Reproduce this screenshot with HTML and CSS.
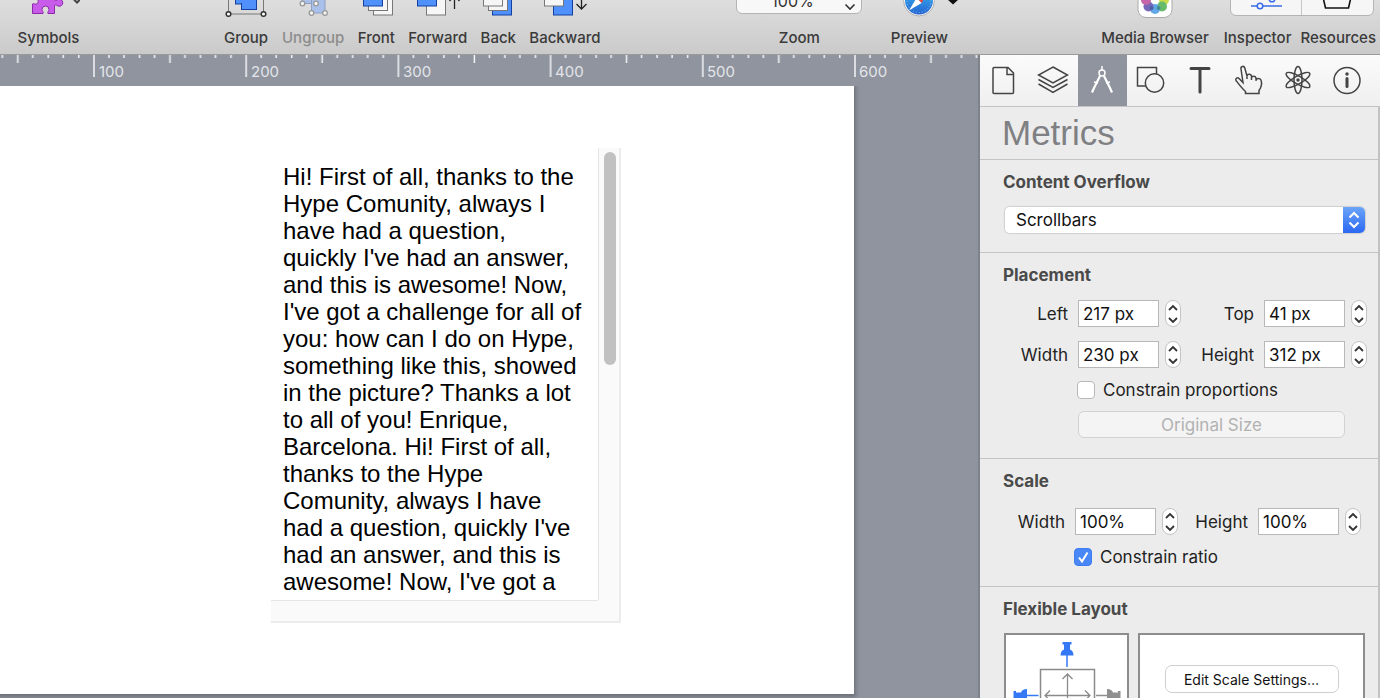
FILE: index.html
```html
<!DOCTYPE html>
<html lang="en">
<head>
<meta charset="utf-8">
<title>Metrics Inspector</title>
<link rel="stylesheet" href="styles.css">
</head>
<body>
<div class="app">
  <header class="toolbar">
    <button class="tool" type="button">
      <svg width="63" height="32" viewBox="0 0 63 32" fill="none">
        <path d="M15.500 3.500H23a4 4 0 1 1 7 0h7.500V12c1.500 1 2 0 3.500-.5a3.500 3.500 0 1 1 0 6.500c-1.500-.5-2-1.500-3.500-.5V25.500h-6.500c-1-1.500 1-2 1-4a3.500 3.500 0 0 0-7 0c0 2 2 2.500 1 4H15.500V16c1.500-1 2.500.5 4 0a3 3 0 0 0 0-5.500c-1.500-.5-2.500 1-4 0z" fill="#c95bea" stroke="#8a2aa8"/>
        <path d="M56 10.500l4 4 4-4" stroke="#444" stroke-width="2"/>
      </svg>
      <span>Symbols</span>
    </button>
    <i class="space space-a"></i>
    <div class="tool-set">
      <button class="tool" type="button">
        <svg width="46" height="32" viewBox="0 0 46 32" fill="none">
          <rect x="5.500" y="1.500" width="35" height="24.500" stroke="#777"/>
          <g fill="#4f90fb" stroke="#1540a0"><rect x="12.500" y="4.500" width="15" height="11.500"/><rect x="18.500" y="9.500" width="15" height="12"/><path d="M13 5h14v10H13z" stroke="none"/></g>
          <g fill="#fff" stroke="#333" stroke-width="1.500"><circle cx="5.500" cy="26" r="2.300"/><circle cx="40.500" cy="26" r="2.300"/></g>
        </svg>
        <span>Group</span>
      </button>
      <button class="tool" type="button" disabled>
        <svg width="46" height="32" viewBox="0 0 46 32">
          <g fill="#a9c1ea" stroke="#8d9fc2"><rect x="12" y="3.500" width="14" height="12"/><rect x="21.500" y="11" width="13.500" height="14"/></g>
          <g fill="#f4f4f4" stroke="#999" stroke-width="1.300"><circle cx="12.500" cy="15.500" r="2.300"/><circle cx="26" cy="15.500" r="2.300"/><circle cx="21.500" cy="25" r="2.300"/><circle cx="35" cy="25" r="2.300"/></g>
        </svg>
        <span>Ungroup</span>
      </button>
      <button class="tool" type="button">
        <svg width="38" height="32" viewBox="1 0 38 32">
          <g fill="#f6f6f6" stroke="#777"><rect x="17.500" y="9.500" width="19" height="17.500"/><rect x="12.500" y="5.500" width="19" height="17"/></g>
          <rect x="7.500" y="1.500" width="19" height="16.500" fill="#4f90fb" stroke="#1540a0"/>
        </svg>
        <span>Front</span>
      </button>
      <button class="tool" type="button">
        <svg width="50" height="32" viewBox="0 0 50 32">
          <rect x="13.500" y="9.500" width="19" height="17.500" fill="#f6f6f6" stroke="#777"/>
          <rect x="4.500" y="1.500" width="19" height="16.500" fill="#4f90fb" stroke="#1540a0"/>
          <path d="M41.500 21V8M36.500 13l5-5 5 5" fill="none" stroke="#222" stroke-width="1.300"/>
        </svg>
        <span>Forward</span>
      </button>
      <button class="tool" type="button">
        <svg width="36" height="32" viewBox="2 0 36 32">
          <rect x="14.500" y="9.500" width="19" height="17.500" fill="#4f90fb" stroke="#1540a0"/>
          <g fill="#f6f6f6" stroke="#777"><rect x="10.500" y="5.500" width="19" height="17"/><rect x="5.500" y="1.500" width="19" height="16.500"/></g>
        </svg>
        <span>Back</span>
      </button>
      <button class="tool" type="button">
        <svg width="50" height="32" viewBox="0 0 50 32">
          <rect x="13.500" y="9.500" width="19" height="17.500" fill="#4f90fb" stroke="#1540a0"/>
          <rect x="4.500" y="1.500" width="19" height="16.500" fill="#f6f6f6" stroke="#777"/>
          <path d="M41.500 6v15M36.500 16l5 5 5-5" fill="none" stroke="#222" stroke-width="1.300"/>
        </svg>
        <span>Backward</span>
      </button>
    </div>
    <i class="space space-b"></i>
    <div class="tool">
      <select class="zoom" id="zoom"><option>100%</option></select>
      <label for="zoom">Zoom</label>
    </div>
    <button class="tool preview" type="button">
      <svg width="84" height="32" viewBox="0 0 84 32">
        <defs><linearGradient id="sea" x1="0" y1="0" x2="0" y2="1"><stop offset="0" stop-color="#39c0f5"/><stop offset="1" stop-color="#2563d0"/></linearGradient></defs>
        <circle cx="42" cy="12.500" r="15.500" fill="#f4f4f4" stroke="#b0b0b0"/>
        <circle cx="42" cy="12.500" r="14" fill="url(#sea)"/>
        <circle cx="42" cy="12.500" r="12" fill="none" stroke="#8cc4fa" stroke-dasharray="1 2"/>
        <path d="M52 2.500L44.500 15 39.500 10z" fill="#f04438"/><path d="M32 22.500L44.500 15 39.500 10z" fill="#fff"/>
        <path d="M70 11h12l-6 5.500z" fill="#111"/>
      </svg>
      <span>Preview</span>
    </button>
    <i class="space space-c"></i>
    <button class="tool" type="button">
      <svg width="38" height="32" viewBox="0 0 38 32">
        <rect x="2" y="-5" width="34" height="34.500" rx="8" fill="#fff" stroke="#aaa"/>
        <g opacity=".9">
          <circle cx="19" cy="3" r="5" fill="#f59a2c"/><circle cx="26" cy="5.500" r="5" fill="#f0cf3a"/><circle cx="28" cy="12" r="5" fill="#c4d936"/><circle cx="26" cy="18.500" r="5" fill="#57b45b"/><circle cx="19" cy="21" r="5" fill="#4f9fe6"/><circle cx="12.500" cy="18.500" r="5" fill="#6a58b5"/><circle cx="10" cy="12" r="5" fill="#c0559f"/><circle cx="12.500" cy="5.500" r="5" fill="#ee6a50"/>
          <circle cx="15.500" cy="20" r="2" fill="#3a4f9c"/><circle cx="22.500" cy="20" r="2" fill="#2f7f86"/>
        </g>
        <circle cx="19" cy="12" r="2" fill="#fff"/>
      </svg>
      <span>Media Browser</span>
    </button>
    <div class="pair">
      <div class="segments">
        <button type="button" aria-labelledby="t-inspector">
          <svg width="40" height="28" viewBox="0 0 40 28" fill="#f6f6f6" stroke="#3a6be8" stroke-width="1.500"><path d="M5 7h31M5 14h31M5 21h31"/><circle cx="14" cy="7" r="2.800"/><circle cx="26" cy="14" r="2.800"/><circle cx="14" cy="21" r="2.800"/></svg>
        </button>
        <button type="button" aria-labelledby="t-resources">
          <svg width="40" height="28" viewBox="0 0 40 28" fill="none" stroke="#111" stroke-width="1.600"><path d="M4 6h32M5.500 10l3 13h23l3-13z"/></svg>
        </button>
      </div>
      <div class="pair-labels"><span id="t-inspector">Inspector</span><span id="t-resources">Resources</span></div>
    </div>
  </header>

  <div class="work">
    <main class="canvas">
      <div class="ruler">
        <svg class="ticks" width="100%" height="22">
          <defs>
            <pattern id="tick" x="93" y="0" width="152.200" height="22" patternUnits="userSpaceOnUse">
              <path d="M1 0v22" stroke="#f4f5f7" stroke-width="1.500"/>
              <path d="M16 0v3M31 0v3M46.500 0v3M61.500 0v3M92 0v3M107.500 0v3M122.500 0v3M138 0v3M77 0v8" stroke="#f4f5f7" stroke-width="1.500"/>
            </pattern>
          </defs>
          <rect width="100%" height="22" fill="url(#tick)"/>
        </svg>
        <div class="marks"><span>100</span><span>200</span><span>300</span><span>400</span><span>500</span><span>600</span></div>
      </div>
      <section class="page">
        <div class="scroll-frame">
          <p class="story">Hi! First of all, thanks to the Hype Comunity, always I have had a question, quickly I've had an answer, and this is awesome! Now, I've got a challenge for all of you: how can I do on Hype, something like this, showed in the picture? Thanks a lot to all of you! Enrique, Barcelona. Hi! First of all, thanks to the Hype Comunity, always I have had a question, quickly I've had an answer, and this is awesome! Now, I've got a</p>
          <div class="track"><div class="thumb"></div></div>
          <div class="track-bottom"></div>
        </div>
      </section>
    </main>

    <aside class="inspector">
      <nav class="tabs">
        <button type="button" aria-label="Document"><svg width="32" height="32" viewBox="0 0 32 32"><path d="M6 3.500h14l5.500 5.500v19.500a1 1 0 0 1-1 1H6a1 1 0 0 1-1-1v-24a1 1 0 0 1 1-1zM19 4v6.500h6.500"/></svg></button>
        <button type="button" aria-label="Scene"><svg width="32" height="32" viewBox="0 0 32 32"><path d="M16 3l14.500 8L16 19 1.500 11zM1.500 15.500l14.500 8 14.500-8M1.500 20l14.500 8.500L30.500 20"/></svg></button>
        <button class="active" type="button" aria-label="Metrics"><svg width="32" height="32" viewBox="0 0 32 32"><circle cx="16" cy="9" r="3"/><path d="M16 2v4"/><path d="M14 12L8 24l-2 4.500M18 12l6 12 2 4.500" stroke-width="2.200"/><path d="M8 18l4 1M24 18l-4 1"/></svg></button>
        <button type="button" aria-label="Element"><svg width="32" height="32" viewBox="0 0 32 32"><path d="M10.500 22H2.500V3.500h19v6.500"/><circle cx="19.500" cy="19" r="9.200"/></svg></button>
        <button type="button" aria-label="Typography"><svg width="32" height="32" viewBox="0 0 32 32"><path d="M7 4.500h18M16 4.500V28" stroke-width="3" stroke-linecap="round"/></svg></button>
        <button type="button" aria-label="Actions"><svg width="32" height="32" viewBox="0 0 32 32"><path d="M12.500 29.500v-2C8.500 24 6 20.500 3 16.500c-1-2 1.500-3.500 3-2l4 4L8 5c-.5-3 3-3.500 3.800-1L14 12c0-2.500 4-2.500 4.500 0v2c0-2.500 4-2.500 4.500 0v2c.5-2 4-2 5 0 1 3 .5 7-2 10.500v3zM14 11v4M18.500 13v3M23 15v2"/></svg></button>
        <button type="button" aria-label="Physics"><svg width="32" height="32" viewBox="0 0 32 32"><ellipse cx="16" cy="16" rx="4" ry="13.500"/><ellipse cx="16" cy="16" rx="4" ry="13.500" transform="rotate(60 16 16)"/><ellipse cx="16" cy="16" rx="4" ry="13.500" transform="rotate(120 16 16)"/><circle cx="16" cy="16" r="1" fill="#444"/></svg></button>
        <button type="button" aria-label="Identity"><svg width="32" height="32" viewBox="0 0 32 32"><circle cx="16" cy="16.500" r="13"/><path d="M16 14.500v8" stroke-width="3" stroke-linecap="round"/><circle cx="16" cy="10" r="1" fill="#444"/></svg></button>
      </nav>

      <div class="panel">
        <h1>Metrics</h1>

        <section class="group overflow">
          <h2><label for="overflow">Content Overflow</label></h2>
          <div class="popup">
            <select id="overflow"><option>Scrollbars</option></select>
            <svg class="popup-cap" width="22" height="26" viewBox="0 0 22 26"><path d="M6.500 10.500L11 6l4.500 4.500M6.500 15.500L11 20l4.500-4.500"/></svg>
          </div>
        </section>

        <section class="group placement">
          <h2>Placement</h2>
          <div class="fields">
            <label for="left">Left</label><input id="left" type="text" value="217 px">
            <button class="stepper" type="button" aria-label="Step left"><svg width="14" height="25" viewBox="0 0 14 25"><path d="M3 9l4-4 4 4M3 17l4 4 4-4"/></svg></button>
            <label for="top">Top</label><input id="top" type="text" value="41 px">
            <button class="stepper" type="button" aria-label="Step top"><svg width="14" height="25" viewBox="0 0 14 25"><path d="M3 9l4-4 4 4M3 17l4 4 4-4"/></svg></button>
            <label for="width">Width</label><input id="width" type="text" value="230 px">
            <button class="stepper" type="button" aria-label="Step width"><svg width="14" height="25" viewBox="0 0 14 25"><path d="M3 9l4-4 4 4M3 17l4 4 4-4"/></svg></button>
            <label for="height">Height</label><input id="height" type="text" value="312 px">
            <button class="stepper" type="button" aria-label="Step height"><svg width="14" height="25" viewBox="0 0 14 25"><path d="M3 9l4-4 4 4M3 17l4 4 4-4"/></svg></button>
          </div>
          <label class="check"><input type="checkbox">Constrain proportions</label>
          <button class="original" type="button" disabled>Original Size</button>
        </section>

        <section class="group scale">
          <h2>Scale</h2>
          <div class="fields">
            <label for="sw">Width</label><input id="sw" type="text" value="100%">
            <button class="stepper" type="button" aria-label="Step scale width"><svg width="14" height="25" viewBox="0 0 14 25"><path d="M3 9l4-4 4 4M3 17l4 4 4-4"/></svg></button>
            <label for="sh">Height</label><input id="sh" type="text" value="100%">
            <button class="stepper" type="button" aria-label="Step scale height"><svg width="14" height="25" viewBox="0 0 14 25"><path d="M3 9l4-4 4 4M3 17l4 4 4-4"/></svg></button>
          </div>
          <label class="check"><input type="checkbox" checked>Constrain ratio</label>
        </section>

        <section class="group flexible">
          <h2>Flexible Layout</h2>
          <div class="flex-row">
            <div class="pins">
              <svg width="122" height="122" viewBox="0 0 122 122" fill="none">
                <rect x="34.500" y="34.500" width="54" height="52" stroke="#8a8a8a" stroke-width="1.500"/>
                <path d="M61.500 39v44M56.500 44l5-5 5 5M56.500 78l5 5 5-5M39 60.500h45M44 55.500l-5 5 5 5M79 55.500l5 5-5 5" stroke="#8a8a8a" stroke-width="1.300"/>
                <g id="pin"><path d="M56.500 7h9v2.500h-1.500v5c2 .8 3.500 2.500 3.500 6H54.500c0-3.500 1.500-5.200 3.500-6v-5h-1.500z" fill="#3478f6"/><path d="M61 20v12" stroke="#3478f6" stroke-width="1.500"/></g>
                <use href="#pin" transform="rotate(-90 61 60.500)"/>
                <path d="M114.500 56v9H112v-1.500h-5c-.8 2-2.500 3.500-6 3.500V54c3.500 0 5.200 1.500 6 3.500h5V56z" fill="#8f8f8f"/><path d="M101 60.500H90" stroke="#8f8f8f" stroke-width="1.500"/>
                <path d="M56.500 114h9v-2.500h-1.500v-5c2-.8 3.500-2.500 3.500-6H54.500c0 3.500 1.500 5.200 3.500 6v5h-1.500z" fill="#8f8f8f"/>
              </svg>
            </div>
            <div class="scale-box"><button type="button">Edit Scale Settings…</button></div>
          </div>
        </section>
      </div>
    </aside>
  </div>
</div>
</body>
</html>
```
FILE: styles.css
```css
* { box-sizing: border-box; }
body { margin: 0; font-family: Inter, "Liberation Sans", sans-serif; font-size: 17px; color: #1c1c1c; }
button, input, select { font: inherit; color: inherit; margin: 0; }
button { border: 0; padding: 0; background: none; }
svg { display: block; flex: none; }
h1, h2, p { margin: 0; }

.app { display: flex; flex-direction: column; height: 100vh; overflow: hidden; }

/* Toolbar */
.toolbar {
  display: flex; align-items: flex-end; flex: none; height: 55px; overflow: hidden;
  padding: 0 4px 6px 17px; border-bottom: 1px solid #9a9a9a;
  background: linear-gradient(#dedede, #cacaca); color: #3a3a3a; font-size: 15px; font-weight: 500; line-height: 20px;
}
.tool { display: flex; flex-direction: column; align-items: center; white-space: nowrap; }
.tool svg { margin-bottom: 8px; }
.tool:disabled { color: #8c8c8c; }
.tool-set { display: flex; align-items: flex-end; gap: 13px; }
.space-a { flex: 141; }
.space-b { flex: 134; }
.space-c { flex: 138; }
.zoom {
  appearance: none; width: 126px; height: 26px; margin-bottom: 14px; border: 1px solid #b4b4b4; border-radius: 6px;
  padding: 0 14px 0 34px; color: #333; font-size: 16px; font-weight: 400; line-height: 24px;
  background: url("data:image/svg+xml,%3Csvg xmlns='http://www.w3.org/2000/svg' width='12' height='8'%3E%3Cpath d='M1.500 1.500l4.500 4.500 4.500-4.500' fill='none' stroke='%23333' stroke-width='1.600'/%3E%3C/svg%3E") no-repeat right 5px top 14px, #f8f8f8;
}
.preview { width: 84px; margin-left: 15px; }
.pair { margin-left: 15px; }
.segments { display: flex; width: 144px; height: 32px; margin: 0 auto 12px 6px; border: 1px solid #b4b4b4; border-radius: 6px; background: #f6f6f6; }
.segments button { display: flex; flex: 1; align-items: flex-start; justify-content: center; }
.segments button + button { border-left: 1px solid #c6c6c6; }
.pair-labels { display: flex; gap: 9px; }

/* Canvas */
.work { display: flex; flex: 1; min-height: 0; }
.canvas { display: flex; flex: 1; flex-direction: column; min-width: 0; background: #8f949e; border-right: 2px solid #7e828b; }
.ruler { flex: none; height: 31px; overflow: hidden; }
.marks { display: flex; padding-left: 99px; margin-top: -14px; color: #e3e5ea; font-size: 15px; line-height: 18px; }
.marks span { flex: none; width: 152px; }
.page { flex: 1; margin: 0 124px 4px 0; padding: 62px 0 0 271px; background: #fff; box-shadow: 0 1px 4px 2px #6e717a; clip-path: inset(0 -8px -8px 0); }
.scroll-frame {
  display: grid; grid-template: 452px 21px / 327px 21px; width: 350px;
  background: #fafafa; border-right: 2px solid #ececec; border-bottom: 2px solid #ececec;
}
.story {
  padding: 15px 14px 0 12px; overflow: hidden; background: #fff; color: #000;
  font-family: "Liberation Sans", Arial, sans-serif; font-size: 24px; line-height: 27px;
}
.track { padding: 4px 4px 0 5px; border-left: 1px solid #e6e6e6; }
.thumb { width: 12px; height: 213px; border-radius: 6px; background: #c1c1c1; }
.track-bottom { border-top: 1px solid #e6e6e6; }

/* Inspector */
.inspector { display: flex; flex: none; flex-direction: column; width: 400px; background: #ececec; }
.tabs { display: flex; flex: none; height: 52px; padding-right: 9px; border-bottom: 1px solid #c4c4c4; background: linear-gradient(#fbfbfb, #efefef); }
.tabs button { display: flex; flex: 1; align-items: flex-start; justify-content: center; padding-top: 9px; }
.tabs svg { fill: none; stroke: #444; stroke-width: 1.5; }
.tabs .active { background: #8f949e; }
.tabs .active svg { stroke: #fff; }
.panel { flex: 1; min-height: 0; overflow: hidden; border-right: 2px solid #c2c2c2; }
h1 { padding: 4px 22px; border-bottom: 1px solid #c4c4c4; color: #7f8083; font-family: "Liberation Sans", Arial, sans-serif; font-size: 35px; font-weight: 400; line-height: 44px; }
h2 { color: #4a4a4a; font-size: 17px; font-weight: 700; line-height: 24px; }
.group { padding: 10px 13px 0 23px; border-bottom: 1px solid #c4c4c4; }
.overflow { padding-bottom: 19px; }
.popup { display: flex; margin: 13px 0 0 2px; border-radius: 5px; overflow: hidden; background: #fff; box-shadow: 0 0 1px 1px #d0d0d0; }
.popup select { flex: 1; appearance: none; height: 26px; padding: 0 11px; border: 0; background: #fff; color: #111; }
.popup-cap { fill: none; stroke: #fff; stroke-width: 2; background: linear-gradient(#6ba4f8, #2b68f2); }
.fields { display: grid; column-gap: 10px; row-gap: 14px; align-items: center; margin-top: 13px; line-height: 20px; }
.fields label { text-align: right; color: #222; }
.fields input { width: 81px; height: 27px; padding: 0 4px; border: 1px solid #b8b8b8; background: #fff; color: #111; }
.placement .fields { grid-template-columns: 65px 81px 15px 60px 81px 15px; }
.stepper { justify-self: start; margin-left: -4px; border: 1px solid #c4c4c4; border-radius: 8px; background: #fff; }
.stepper svg { fill: none; stroke: #333; stroke-width: 1.8; }
.check { display: flex; align-items: center; gap: 8px; margin: 12px 0 0 74px; line-height: 20px; color: #222; }
.check input { appearance: none; width: 18px; height: 18px; border: 1px solid #b8b8b8; border-radius: 4px; background: #fff; }
.check input:checked {
  border-color: #3f7df2;
  background: url("data:image/svg+xml,%3Csvg xmlns='http://www.w3.org/2000/svg' width='16' height='16'%3E%3Cpath d='M4 8.500l3 4L12.500 3.500' fill='none' stroke='%23fff' stroke-width='2'/%3E%3C/svg%3E") center no-repeat, #4a87f6;
}
.original { display: block; width: 267px; height: 27px; margin: 11px 0 20px 75px; border: 1px solid #d2d2d2; border-radius: 6px; background: #f4f4f4; color: #b2b2b2; }
.scale .fields { grid-template-columns: 62px 81px 16px 56px 81px 16px; margin-top: 15px; }
.scale .check { margin: 12px 0 19px 71px; }
.flexible { border-bottom: 0; }
.flex-row { display: flex; gap: 9px; margin: 12px 0 0 1px; }
.pins, .scale-box { border: 2px solid #8d8d8d; background: #fff; }
.pins { width: 125px; flex: none; }
.scale-box { flex: 1; padding-top: 30px; text-align: center; }
.scale-box button { display: block; width: 174px; height: 28px; margin: 0 auto; border: 1px solid #cfcfcf; border-radius: 7px; background: #fff; color: #111; font-size: 14px; }
```
